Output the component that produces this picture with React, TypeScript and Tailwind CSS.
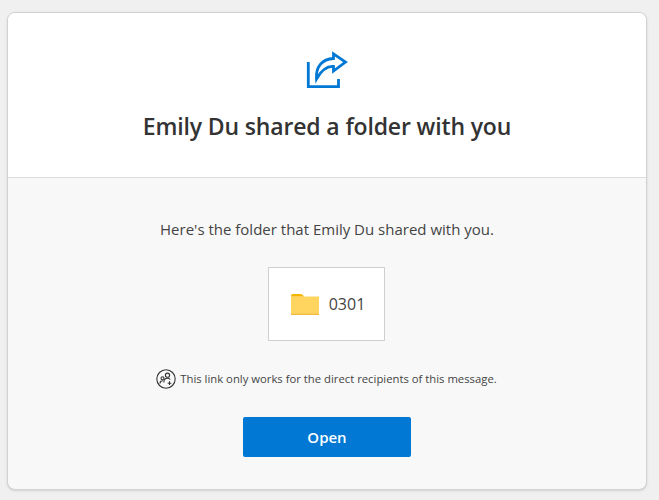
export default function App() {
  return (
    <div className="h-[500px] w-[659px] overflow-hidden bg-[#f0f0f0] pl-[7px] pr-3 pt-3 font-['Open_Sans',sans-serif] text-[#333333]">
      <div className="h-[478px] w-[640px] overflow-hidden rounded-lg border border-[#d2d2d2] bg-[#f8f8f8] shadow-sm">
        {/* Header */}
        <div className="flex h-[165px] flex-col items-center border-b border-[#dcdcdc] bg-white pt-[38px]">
          <svg width="42" height="38" viewBox="0 0 42 38" fill="none" stroke="#0078d4" strokeWidth="2.800">
            <path d="M2.300 11V35.700H32.500V28" />
            <path d="M10.500 28C9.500 16 16 8 27.500 7.500V2.800L39.500 11L27.500 20V15.500C20 15 15 20 10.500 28Z" />
          </svg>
          <h1 className="mt-[21px] text-[23px] font-semibold leading-[32px] tracking-[-0.15px] text-[#333333]">
            Emily Du shared a folder with you
          </h1>
        </div>

        {/* Body */}
        <div className="flex flex-col items-center pt-[41px]">
          <p className="text-[15px] leading-[20px] text-[#444444]">
            Here's the folder that Emily Du shared with you.
          </p>

          <div className="mr-[2px] mt-[28px] flex h-[74px] w-[117px] items-center justify-center gap-[10px] border border-[#cfcfcf] bg-white pl-[4px]">
            <svg width="28" height="21" viewBox="0 0 28 21">
              <path d="M0 2.500H28V19.500C28 20.400 27.400 21 26.500 21H1.500C.6 21 0 20.400 0 19.500Z" fill="#ffd45f" />
              <path d="M0 2C0 1 .6 0 2 0H9.500C11 0 12 1 13 2.500H0Z" fill="#f5b400" />
              <rect x="0" y="19.800" width="28" height="1.200" fill="#f0b93f" />
            </svg>
            <span className="text-[16px] leading-5 text-[#444444]">0301</span>
          </div>

          <div className="mr-[1px] mt-[28px] flex items-center gap-[4px]">
            <svg width="20" height="20" viewBox="0 0 20 20" fill="none" stroke="#333333" strokeWidth="1.100">
              <circle cx="10" cy="10" r="9.200" />
              <circle cx="11.500" cy="6.200" r="2.100" />
              <path d="M7.800 13.500C7.800 10.500 9.200 9.300 11.500 9.300C12.700 9.300 13.500 9.700 14.200 10.500" />
              <circle cx="6.500" cy="9.200" r="1.500" />
              <path d="M4 14.500C4 12.700 5 11.800 6.800 11.800" />
              <path d="M13.500 12.300V16M11.700 14.200H15.300" />
            </svg>
            <span className="text-[11.300px] leading-4 text-[#444444]">
              This link only works for the direct recipients of this message.
            </span>
          </div>

          <button className="mt-[28px] h-10 w-[168px] rounded-[2px] bg-[#0078d4] text-[15px] font-semibold text-white">
            Open
          </button>
        </div>
      </div>
    </div>
  );
}
